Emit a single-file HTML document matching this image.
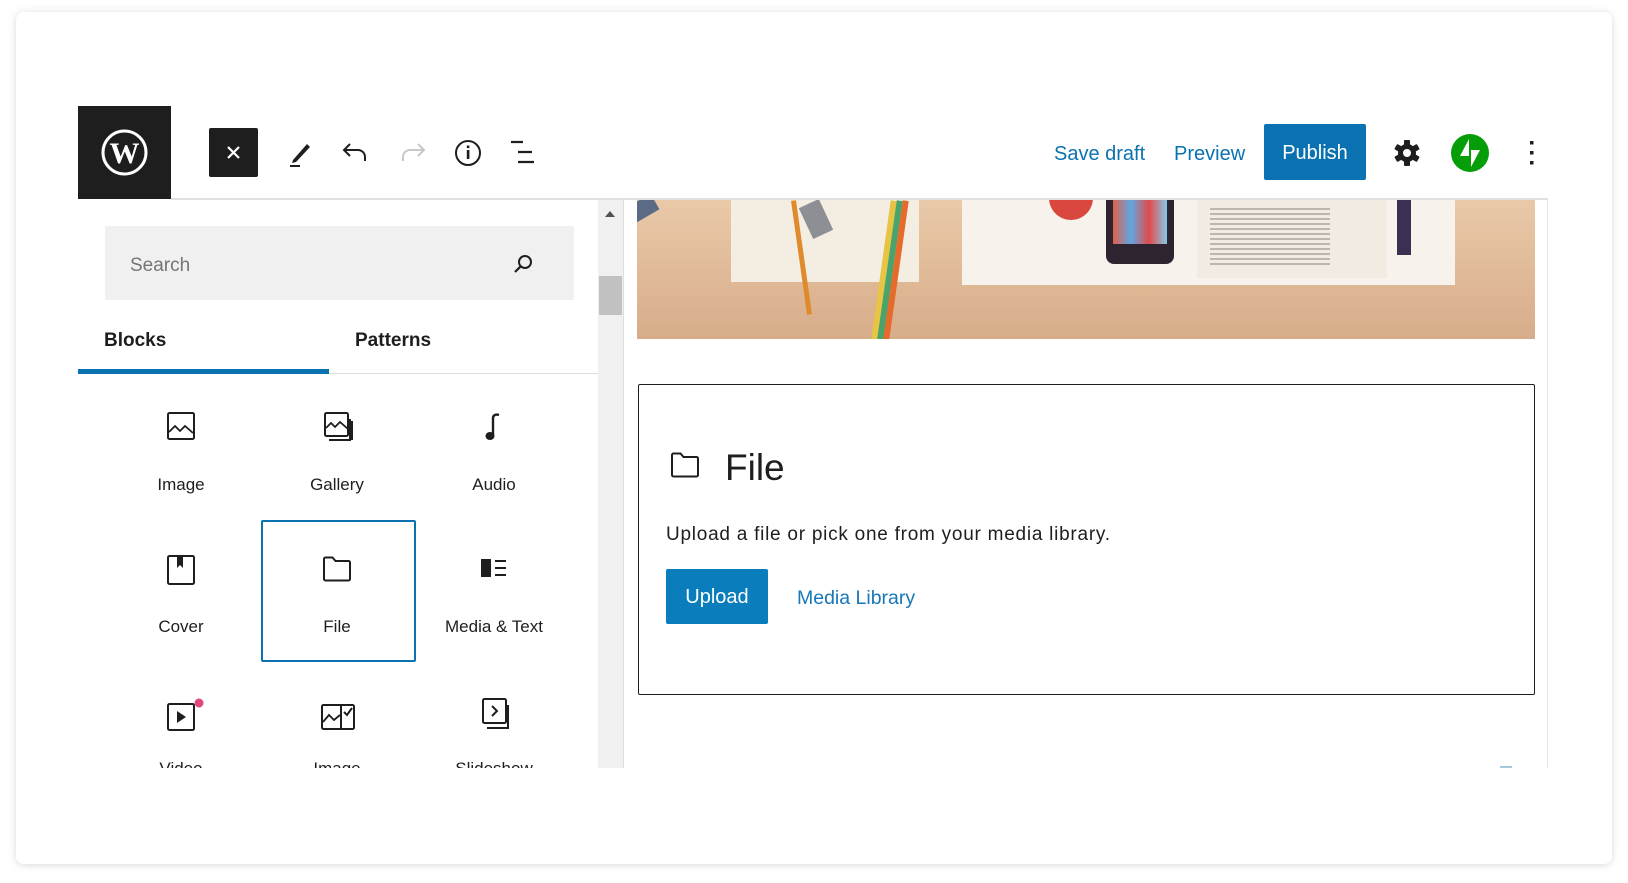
<!DOCTYPE html>
<html><head><meta charset="utf-8">
<style>
*{box-sizing:border-box;margin:0;padding:0}
body{width:1628px;height:883px;background:#fff;font-family:"Liberation Sans",sans-serif;position:relative;overflow:hidden;color:#1e1e1e}
.card{position:absolute;left:16px;top:12px;width:1596px;height:852px;background:#fff;border-radius:8px;box-shadow:0 0 10px rgba(0,0,0,0.10),0 2px 6px rgba(0,0,0,0.06)}
.a{position:absolute}
.blue{color:#0a72b0}
.lbl{position:absolute;font-size:17px;color:#1e1e1e;text-align:center;width:150px}
</style></head><body>
<div class="card"></div>

<!-- header -->
<div class="a" style="left:78px;top:106px;width:93px;height:93px;background:#1e1e1e"></div>
<svg class="a" style="left:101px;top:129px" width="47" height="47" viewBox="0 0 47 47">
<circle cx="23.5" cy="23.5" r="21.5" fill="none" stroke="#fff" stroke-width="3"/>
<text x="23.5" y="34" text-anchor="middle" font-family="Liberation Serif" font-weight="bold" font-size="30" fill="#fff">W</text>
</svg>
<div class="a" style="left:171px;top:198px;width:1377px;height:2px;background:#e0e0e0"></div>

<div class="a" style="left:209px;top:128px;width:49px;height:49px;background:#1e1e1e;border-radius:2px"></div>
<svg class="a" style="left:225px;top:144px" width="17" height="17" viewBox="0 0 17 17"><path d="M3 3L14 14M14 3L3 14" stroke="#fff" stroke-width="2.2"/></svg>

<svg class="a" style="left:286px;top:138px" width="28" height="30" viewBox="0 0 28 30"><path d="M7 22L21 6l3 3L10 24l-4 1z" fill="#1e1e1e"/><path d="M4 28h10" stroke="#1e1e1e" stroke-width="2"/></svg>
<svg class="a" style="left:342px;top:141px" width="28" height="24" viewBox="0 0 28 24"><path d="M8 3L2 9l6 6M2 9h14a7 7 0 0 1 7 7v4" fill="none" stroke="#1e1e1e" stroke-width="2"/></svg>
<svg class="a" style="left:398px;top:141px" width="28" height="24" viewBox="0 0 28 24"><path d="M20 3l6 6-6 6M26 9H12a7 7 0 0 0-7 7v4" fill="none" stroke="#c8c8c8" stroke-width="2"/></svg>
<svg class="a" style="left:454px;top:139px" width="28" height="28" viewBox="0 0 28 28"><circle cx="14" cy="14" r="12" fill="none" stroke="#1e1e1e" stroke-width="2"/><rect x="12.8" y="11" width="2.6" height="9" fill="#1e1e1e"/><rect x="12.8" y="6.5" width="2.6" height="2.6" fill="#1e1e1e"/></svg>
<svg class="a" style="left:510px;top:140px" width="30" height="26" viewBox="0 0 30 26"><path d="M1 2h12M8 12h14M8 22h16" stroke="#1e1e1e" stroke-width="2.2"/></svg>

<div class="a blue" style="left:1054px;top:143px;font-size:20px">Save draft</div>
<div class="a blue" style="left:1174px;top:143px;font-size:20px">Preview</div>
<div class="a" style="left:1264px;top:124px;width:102px;height:56px;background:#0a72b0;border-radius:2px;color:#fff;font-size:20px;text-align:center;line-height:58px">Publish</div>
<svg class="a" style="left:1393px;top:139px" width="28" height="28" viewBox="0 0 28 28"><g fill="#1e1e1e"><circle cx="14" cy="14" r="9"/><rect x="11" y="1" width="6" height="26" rx="1"/><rect x="11" y="1" width="6" height="26" rx="1" transform="rotate(60 14 14)"/><rect x="11" y="1" width="6" height="26" rx="1" transform="rotate(120 14 14)"/></g><circle cx="14" cy="14" r="4" fill="#fff"/></svg>
<svg class="a" style="left:1451px;top:134px" width="38" height="38" viewBox="0 0 38 38"><circle cx="19" cy="19" r="19" fill="#069e08"/><path d="M18 5v17H9z M20 33V16h9z" fill="#fff"/></svg>
<svg class="a" style="left:1528px;top:140px" width="8" height="26" viewBox="0 0 8 26"><rect x="2" y="1" width="3.5" height="3.5" fill="#1e1e1e"/><rect x="2" y="11" width="3.5" height="3.5" fill="#1e1e1e"/><rect x="2" y="21" width="3.5" height="3.5" fill="#1e1e1e"/></svg>

<!-- sidebar -->
<div class="a" style="left:598px;top:200px;width:26px;height:568px;background:#f0f0f0;border-right:1px solid #ddd"></div>
<div class="a" style="left:599px;top:276px;width:23px;height:39px;background:#c1c1c1"></div>
<svg class="a" style="left:604px;top:210px" width="12" height="8"><path d="M1 7L6 1l5 6z" fill="#505050"/></svg>

<div class="a" style="left:105px;top:226px;width:469px;height:74px;background:#f0f0f0;border-radius:2px"></div>
<div class="a" style="left:130px;top:255px;font-size:19px;color:#757575">Search</div>
<svg class="a" style="left:512px;top:252px" width="24" height="24" viewBox="0 0 24 24"><circle cx="13" cy="10" r="6" fill="none" stroke="#1e1e1e" stroke-width="2"/><path d="M9 14l-6 6" stroke="#1e1e1e" stroke-width="2.2"/></svg>

<div class="a" style="left:104px;top:330px;font-size:19px;font-weight:bold;color:#1e1e1e">Blocks</div>
<div class="a" style="left:355px;top:330px;font-size:19px;font-weight:bold;color:#1e1e1e">Patterns</div>
<div class="a" style="left:78px;top:373px;width:520px;height:1px;background:#ddd"></div>
<div class="a" style="left:78px;top:369px;width:251px;height:5px;background:#0a72b0"></div>

<div class="a" style="left:0;top:380px;width:598px;height:388px;overflow:hidden">
 <div class="a" style="left:261px;top:140px;width:155px;height:142px;border:2px solid #0a72b0;border-radius:2px"></div>
 <svg class="a" style="left:166px;top:31px" width="30" height="30" viewBox="0 0 30 30"><rect x="2" y="2" width="26" height="26" rx="1.5" fill="none" stroke="#1e1e1e" stroke-width="2"/><path d="M3 21l6-6 5 5 5-5 8 7" fill="none" stroke="#1e1e1e" stroke-width="1.8"/></svg>
 <svg class="a" style="left:323px;top:31px" width="32" height="32" viewBox="0 0 32 32"><rect x="2" y="2" width="23" height="23" rx="1.5" fill="none" stroke="#1e1e1e" stroke-width="2"/><path d="M3 17l5-5 4 4 5-5 8 7" fill="none" stroke="#1e1e1e" stroke-width="1.8"/><path d="M6 29h21V8" fill="none" stroke="#1e1e1e" stroke-width="2"/><path d="M29 10v19" stroke="#1e1e1e" stroke-width="2"/></svg>
 <svg class="a" style="left:484px;top:32px" width="20" height="30" viewBox="0 0 20 30"><path d="M9 23V6c0-3 3-4 6-3" fill="none" stroke="#1e1e1e" stroke-width="2.4"/><ellipse cx="6" cy="24" rx="4.5" ry="4" fill="#1e1e1e"/></svg>
 <div class="lbl" style="left:106px;top:95px">Image</div>
 <div class="lbl" style="left:262px;top:95px">Gallery</div>
 <div class="lbl" style="left:419px;top:95px">Audio</div>
 <svg class="a" style="left:166px;top:174px" width="30" height="32" viewBox="0 0 30 32"><rect x="2" y="2" width="26" height="28" rx="1.5" fill="none" stroke="#1e1e1e" stroke-width="2"/><path d="M11 2v12l3-3 3 3V2z" fill="#1e1e1e"/></svg>
 <svg class="a" style="left:322px;top:175px" width="30" height="28" viewBox="0 0 30 28"><path d="M2 4a1.5 1.5 0 0 1 1.5-1.5h7l3 3.5h13a1.5 1.5 0 0 1 1.5 1.5V24a1.5 1.5 0 0 1-1.5 1.5h-23A1.5 1.5 0 0 1 2 24z" fill="none" stroke="#1e1e1e" stroke-width="2"/></svg>
 <svg class="a" style="left:480px;top:177px" width="28" height="22" viewBox="0 0 28 22"><rect x="1" y="2" width="10" height="18" fill="#1e1e1e"/><path d="M15 4h11M15 11h11M15 18h11" stroke="#1e1e1e" stroke-width="2"/></svg>
 <div class="lbl" style="left:106px;top:237px">Cover</div>
 <div class="lbl" style="left:262px;top:237px">File</div>
 <div class="lbl" style="left:419px;top:237px">Media &amp; Text</div>
 <svg class="a" style="left:166px;top:316px" width="40" height="36" viewBox="0 0 40 36"><rect x="2" y="8" width="26" height="26" rx="1.5" fill="none" stroke="#1e1e1e" stroke-width="2"/><path d="M11 15v12l9-6z" fill="#1e1e1e"/><circle cx="33" cy="7" r="4.5" fill="#e0487d"/></svg>
 <svg class="a" style="left:320px;top:322px" width="36" height="30" viewBox="0 0 36 30"><rect x="2" y="3" width="32" height="24" rx="1.5" fill="none" stroke="#1e1e1e" stroke-width="2"/><path d="M21 3v24" stroke="#1e1e1e" stroke-width="2"/><path d="M3 20l6-7 5 5 6-5" fill="none" stroke="#1e1e1e" stroke-width="1.8"/><path d="M24 10l3 3 5-7" fill="none" stroke="#1e1e1e" stroke-width="2"/></svg>
 <svg class="a" style="left:481px;top:317px" width="30" height="34" viewBox="0 0 30 34"><rect x="2" y="2" width="23" height="24" rx="1.5" fill="none" stroke="#1e1e1e" stroke-width="2"/><path d="M11 9l5 5-5 5" fill="none" stroke="#1e1e1e" stroke-width="2"/><path d="M6 31h21V8" fill="none" stroke="#1e1e1e" stroke-width="2"/></svg>
 <div class="lbl" style="left:106px;top:379px">Video</div>
 <div class="lbl" style="left:262px;top:379px">Image</div>
 <div class="lbl" style="left:419px;top:379px">Slideshow</div>
</div>

<!-- content -->
<div class="a" style="left:1547px;top:200px;width:1px;height:568px;background:#e4e4e4"></div>
<div class="a" style="left:637px;top:200px;width:898px;height:139px;overflow:hidden;background:linear-gradient(180deg,#e9c9a8,#ddb592 70%,#d7ac8a)">
 <div class="a" style="left:-10px;top:0;width:30px;height:18px;background:#5b6b86;transform:rotate(-30deg)"></div>
 <div class="a" style="left:94px;top:0;width:188px;height:82px;background:#f4ede2"></div>
 <div class="a" style="left:168px;top:2px;width:22px;height:34px;background:#8d8f94;transform:rotate(-25deg)"></div>
 <div class="a" style="left:162px;top:0;width:5px;height:115px;background:#e08a2e;transform:rotate(-8deg)"></div>
 <div class="a" style="left:244px;top:0;width:6px;height:140px;background:#e7c443;transform:rotate(8deg)"></div>
 <div class="a" style="left:250px;top:0;width:6px;height:140px;background:#4aa36a;transform:rotate(8deg)"></div>
 <div class="a" style="left:256px;top:0;width:6px;height:140px;background:#e66a2c;transform:rotate(8deg)"></div>
 <div class="a" style="left:325px;top:0;width:493px;height:85px;background:#f7f2ec"></div>
 <div class="a" style="left:560px;top:0;width:190px;height:78px;background:#f2ebe1"></div>
 <div class="a" style="left:573px;top:8px;height:60px;background:repeating-linear-gradient(#555 0 2px,transparent 2px 5px);width:120px;opacity:.35"></div>
 <div class="a" style="left:760px;top:0;width:14px;height:55px;background:#3a3152"></div>
 <div class="a" style="left:412px;top:-24px;width:44px;height:44px;border-radius:50%;background:#d9473f"></div>
 <div class="a" style="left:469px;top:-10px;width:68px;height:74px;border-radius:8px;background:#2d2430"></div>
 <div class="a" style="left:476px;top:0;width:54px;height:44px;background:linear-gradient(90deg,#e4604a,#5fa7e2,#e24b4b,#82c9e8)"></div>
</div>

<div class="a" style="left:638px;top:384px;width:897px;height:311px;border:1.5px solid #1e1e1e;border-radius:2px"></div>
<svg class="a" style="left:670px;top:451px" width="30" height="28" viewBox="0 0 30 28"><path d="M2 4a1.5 1.5 0 0 1 1.5-1.5h7l3 3.5h13a1.5 1.5 0 0 1 1.5 1.5V24a1.5 1.5 0 0 1-1.5 1.5h-23A1.5 1.5 0 0 1 2 24z" fill="none" stroke="#1e1e1e" stroke-width="2"/></svg>
<div class="a" style="left:725px;top:447px;font-size:37px;color:#1e1e1e">File</div>
<div class="a" style="left:666px;top:524px;font-size:19px;color:#1e1e1e;letter-spacing:0.75px">Upload a file or pick one from your media library.</div>
<div class="a" style="left:666px;top:569px;width:102px;height:55px;background:#0a7dbd;border-radius:2px;color:#fff;font-size:20px;text-align:center;line-height:57px">Upload</div>
<div class="a blue" style="left:797px;top:587px;font-size:19.5px;color:#1777b8">Media Library</div>
<div class="a" style="left:1500px;top:766px;width:12px;height:2px;background:#a6c8dc"></div>
</body></html>
